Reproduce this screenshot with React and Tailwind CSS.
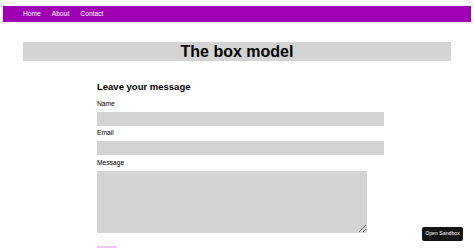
export default function App() {
  return (
    <div className="relative w-[474px] h-[248px] overflow-hidden bg-white" style={{ fontFamily: '"Liberation Sans", Arial, sans-serif' }}>
      <nav className="mx-[3px] mt-[6px] h-[16px] bg-[#a000b4] flex items-center pl-[20px] gap-[11px] text-white text-[6.7px] leading-none">
        <span>Home</span>
        <span>About</span>
        <span>Contact</span>
      </nav>
      <div className="mx-[23px] mt-[20px] h-[19px] bg-[#d3d3d3] flex items-center justify-center">
        <h1 className="text-[16px] font-bold leading-none text-black">The box model</h1>
      </div>
      <div className="pl-[97px] pt-[20px]">
        <h2 className="text-[9.5px] font-bold leading-[11px] text-black">Leave your message</h2>
        <div className="mt-[8px] text-[6.7px] leading-[8px] text-black">Name</div>
        <div className="mt-[4px] w-[287px] h-[14px] bg-[#d3d3d3]"></div>
        <div className="mt-[3px] text-[6.7px] leading-[8px] text-black">Email</div>
        <div className="mt-[4px] w-[287px] h-[14px] bg-[#d3d3d3]"></div>
        <div className="mt-[4px] text-[6.7px] leading-[8px] text-black">Message</div>
        <textarea className="block mt-[4px] w-[270px] h-[62px] bg-[#d3d3d3] outline-none border-0"></textarea>
        <div className="mt-[13px] w-[20px] h-[6px] bg-[#ecc6f0]"></div>
      </div>
      <div className="absolute right-[11px] bottom-[7px] h-[14px] w-[41px] flex items-center justify-center bg-[#151515] rounded-[2px] text-white text-[5.2px] leading-none">
        Open Sandbox
      </div>
    </div>
  );
}
